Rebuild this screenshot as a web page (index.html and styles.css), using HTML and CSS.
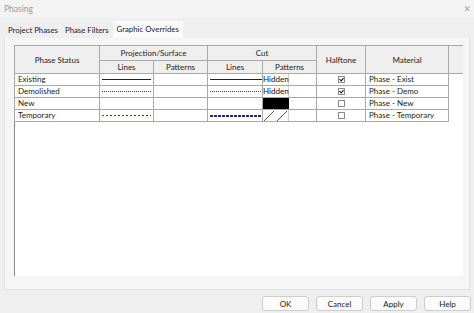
FILE: index.html
```html
<!DOCTYPE html>
<html>
<head>
<meta charset="utf-8">
<link rel="stylesheet" href="styles.css">
</head>
<body>
<div class="dialog">
  <div class="titlebar">
    <span class="title">Phasing</span>
    <span class="close">&#x2715;</span>
  </div>
  <div class="tabs">
    <div class="tab">Project Phases</div>
    <div class="tab">Phase Filters</div>
    <div class="tab active">Graphic Overrides</div>
  </div>
  <div class="panel">
    <div class="grid">
      <table class="tbl">
        <colgroup>
          <col class="c-status"><col class="c-pl"><col class="c-pp"><col class="c-cl"><col class="c-cp"><col class="c-ht"><col class="c-mat"><col class="c-fill">
        </colgroup>
        <thead>
          <tr class="h1">
            <th rowspan="2">Phase Status</th>
            <th colspan="2">Projection/Surface</th>
            <th colspan="2">Cut</th>
            <th rowspan="2">Halftone</th>
            <th rowspan="2">Material</th>
            <th rowspan="2" class="filler"></th>
          </tr>
          <tr class="h2">
            <th>Lines</th><th>Patterns</th><th>Lines</th><th>Patterns</th>
          </tr>
        </thead>
        <tbody>
          <tr>
            <td class="name">Existing</td>
            <td><div class="ln solid"></div></td>
            <td></td>
            <td><div class="ln solid cutln"></div></td>
            <td class="pat"><div class="sw hidden">Hidden</div></td>
            <td class="ctr"><span class="cb on"></span></td>
            <td class="name">Phase - Exist</td>
            <td class="nob"></td>
          </tr>
          <tr>
            <td class="name">Demolished</td>
            <td><div class="ln dot"></div></td>
            <td></td>
            <td><div class="ln dot cutln"></div></td>
            <td class="pat"><div class="sw hidden">Hidden</div></td>
            <td class="ctr"><span class="cb on"></span></td>
            <td class="name">Phase - Demo</td>
            <td class="nob"></td>
          </tr>
          <tr>
            <td class="name">New</td>
            <td></td>
            <td></td>
            <td></td>
            <td class="pat"><div class="sw black"></div></td>
            <td class="ctr"><span class="cb"></span></td>
            <td class="name">Phase - New</td>
            <td class="nob"></td>
          </tr>
          <tr>
            <td class="name">Temporary</td>
            <td><div class="ln dash"></div></td>
            <td></td>
            <td><div class="ln thickdash cutln"></div></td>
            <td class="pat"><div class="sw diag"><svg width="26" height="11" viewBox="0 0 26 11"><line x1="1" y1="11" x2="11" y2="1" stroke="#333" stroke-width="0.8"/><line x1="14" y1="11" x2="24" y2="1" stroke="#333" stroke-width="0.8"/></svg></div></td>
            <td class="ctr"><span class="cb"></span></td>
            <td class="name">Phase - Temporary</td>
            <td class="nob"></td>
          </tr>
        </tbody>
      </table>
    </div>
  </div>
  <div class="footer">
    <button class="btn">OK</button>
    <button class="btn">Cancel</button>
    <button class="btn">Apply</button>
    <button class="btn">Help</button>
  </div>
</div>
</body>
</html>
```
FILE: styles.css
```css
html, body {
  margin: 0;
  padding: 0;
  background: #f0f0f0;
}
body {
  width: 474px;
  height: 313px;
  overflow: hidden;
  font-family: Lato, "Open Sans", sans-serif;
  font-size: 8px;
  color: #1a1a1a;
}
.dialog {
  width: 474px;
  height: 313px;
  display: flex;
  flex-direction: column;
  background: #efefef;
}
.titlebar {
  height: 18px;
  display: flex;
  align-items: center;
  justify-content: space-between;
  padding: 0 3px 0 4px;
  background: #f3f3f3;
}
.title {
  color: #9a9a9a;
  font-size: 8.5px;
}
.close {
  color: #a8a8a8;
  font-size: 9px;
  font-family: "DejaVu Sans", sans-serif;
}
.tabs {
  display: flex;
  align-items: flex-end;
  height: 20px;
  padding-left: 5px;
}
.tab {
  height: 15px;
  line-height: 15px;
  padding: 0 3px;
  font-size: 7.8px;
  color: #222;
}
.tab + .tab { margin-left: 1px; }
.tab.active {
  background: #fafafa;
  height: 17px;
  line-height: 16px;
  margin-left: 1px;
  padding: 0 4px;
}
.panel {
  margin: 0 4px 0 4px;
  height: 252px;
  background: #f6f6f6;
  border: 1px solid #e2e2e2;
  border-top: none;
  padding: 7px 0 0 9px;
  box-sizing: border-box;
}
.grid {
  width: 449px;
  height: 231px;
  background: #ffffff;
  border-left: 1px solid #8a8a8a;
  border-top: 1px solid #c8c8c8;
  box-sizing: border-box;
}
.tbl {
  border-collapse: collapse;
  table-layout: fixed;
  width: 448px;
  margin-top: -1px;
  margin-left: -1px;
}
.c-status { width: 85px; }
.c-pl { width: 54px; }
.c-pp { width: 54px; }
.c-cl { width: 55px; }
.c-cp { width: 54px; }
.c-ht { width: 49px; }
.c-mat { width: 83px; }
.c-fill { width: 14px; }
.tbl th {
  background: #efefef;
  border: 1px solid #a9a9a9;
  font-weight: normal;
  font-size: 8px;
  color: #222;
  padding: 0;
  text-align: center;
}
.tbl th.filler {
  border-right: none;
  background: #efefef;
}
.h1 th { height: 14px; }
.h2 th { height: 12px; }
.tbl td {
  border: 1px solid #a9a9a9;
  height: 11px;
  padding: 0;
  font-size: 8px;
  line-height: 11px;
  color: #1a1a1a;
  vertical-align: middle;
}
.tbl td.nob {
  border: none;
}
.tbl td.name {
  padding-left: 3px;
  white-space: nowrap;
}
.tbl td.ctr { text-align: center; }
.ln {
  margin: 0 2px;
  height: 0;
}
.ln.cutln { margin-right: 0; }
.ln.solid { border-top: 1px solid #222; }
.ln.dot {
  height: 1px;
  background: repeating-linear-gradient(90deg, #444 0 1px, transparent 1px 2px);
}
.ln.dash {
  height: 1px;
  background: repeating-linear-gradient(90deg, #3a3a8a 0 2px, transparent 2px 4px);
}
.ln.thickdash {
  height: 2px;
  background: repeating-linear-gradient(90deg, #24247a 0 3px, transparent 3px 4px);
}
.pat { padding: 0; }
.sw {
  width: 26px;
  height: 11px;
  box-sizing: border-box;
  border-right: 1px solid #cfcfcf;
}
.sw.hidden {
  font-size: 8px;
  line-height: 11px;
  color: #111;
  white-space: nowrap;
}
.sw.black {
  background: #000;
  border-right: 1px solid #000;
}
.sw.diag svg { display: block; }
.cb {
  display: inline-block;
  width: 7px;
  height: 7px;
  border: 1px solid #8a8a8a;
  box-sizing: border-box;
  background: #fff;
  vertical-align: middle;
  position: relative;
}
.cb.on::after {
  content: "";
  position: absolute;
  left: 1px;
  top: 0px;
  width: 2px;
  height: 3px;
  border-right: 1.2px solid #111;
  border-bottom: 1.2px solid #111;
  transform: rotate(40deg);
}
.footer {
  display: flex;
  justify-content: flex-end;
  gap: 7px;
  padding: 6px 3px 0 0;
}
.btn {
  width: 47px;
  height: 15px;
  padding: 0;
  border: 1px solid #cdcdcd;
  border-radius: 3px;
  background: #fbfbfb;
  font-family: Lato, "Open Sans", sans-serif;
  font-size: 8px;
  color: #222;
}
```
